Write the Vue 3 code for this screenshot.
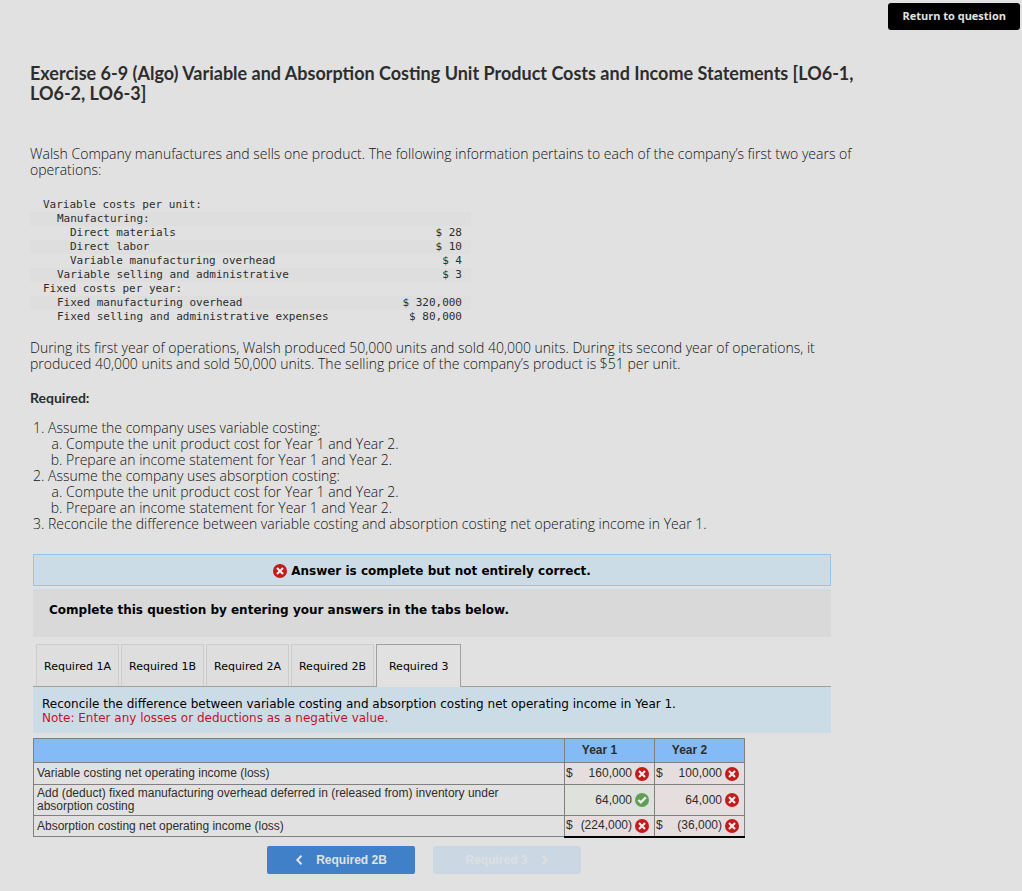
<template>
  <div class="page">
    <header class="topbar">
      <button type="button" class="return-btn">Return to question</button>
    </header>

    <main class="content">
      <h1 class="title">
        Exercise 6-9 (Algo) Variable and Absorption Costing Unit Product Costs and Income Statements [LO6-1,
        LO6-2, LO6-3]
      </h1>

      <p class="text intro">
        Walsh Company manufactures and sells one product. The following information pertains to each of the company’s first two years of
        operations:
      </p>

      <table class="costs">
        <tbody>
          <tr v-for="row in costs" :key="row.label">
            <th scope="row" :class="`level-${row.level}`">{{ row.label }}</th>
            <td>{{ row.value }}</td>
          </tr>
        </tbody>
      </table>

      <p class="text operations">
        During its first year of operations, Walsh produced 50,000 units and sold 40,000 units. During its second year of operations, it
        produced 40,000 units and sold 50,000 units. The selling price of the company’s product is $51 per unit.
      </p>

      <h2 class="required">Required:</h2>

      <ol class="text tasks">
        <li v-for="task in tasks" :key="task.text">
          {{ task.text }}
          <ol v-if="task.parts" class="parts">
            <li v-for="part in task.parts" :key="part">{{ part }}</li>
          </ol>
        </li>
      </ol>

      <section class="worksheet">
        <div class="banner">
          <svg class="mark" viewBox="0 0 14 14" aria-hidden="true">
            <circle cx="7" cy="7" r="7" fill="#c41a1a" />
            <path d="M4 4l6 6M10 4L4 10" stroke="#eee" stroke-width="2.2" />
          </svg>
          <span>Answer is complete but not entirely correct.</span>
        </div>

        <div class="instructions">Complete this question by entering your answers in the tabs below.</div>

        <div class="tabs" role="tablist">
          <button
            v-for="tab in tabs"
            :key="tab"
            type="button"
            role="tab"
            class="tab"
            :class="{ active: tab === activeTab }"
            :aria-selected="tab === activeTab"
            @click="activeTab = tab"
          >
            {{ tab }}
          </button>
        </div>

        <div class="prompt">
          <p>Reconcile the difference between variable costing and absorption costing net operating income in Year 1.</p>
          <p class="note">Note: Enter any losses or deductions as a negative value.</p>
        </div>

        <table class="answers">
          <colgroup>
            <col />
            <col class="year" />
            <col class="year" />
          </colgroup>
          <thead>
            <tr>
              <td></td>
              <th scope="col"><span>Year 1</span></th>
              <th scope="col"><span>Year 2</span></th>
            </tr>
          </thead>
          <tbody>
            <tr v-for="row in answers" :key="row.label">
              <th scope="row"><div class="row-label">{{ row.label }}</div></th>
              <td
                v-for="(cell, i) in row.cells"
                :key="i"
                :class="[cell.correct ? 'right' : 'wrong', { total: row.total }]"
              >
                <div class="answer">
                  <span>{{ row.currency ? '$' : '' }}</span>
                  <span class="amount">{{ cell.value }}</span>
                  <svg v-if="cell.correct" class="mark" viewBox="0 0 14 14" role="img" aria-label="Correct">
                    <circle cx="7" cy="7" r="7" fill="#5f9f58" />
                    <path d="M3.3 7l2.5 2.4 5-5" fill="none" stroke="#eee" stroke-width="2.2" />
                  </svg>
                  <svg v-else class="mark" viewBox="0 0 14 14" role="img" aria-label="Incorrect">
                    <circle cx="7" cy="7" r="7" fill="#c41a1a" />
                    <path d="M4 4l6 6M10 4L4 10" stroke="#eee" stroke-width="2.2" />
                  </svg>
                </div>
              </td>
            </tr>
          </tbody>
        </table>

        <nav class="pager">
          <button type="button" class="pager-btn">
            <svg class="chevron" viewBox="0 0 8 10" aria-hidden="true">
              <path d="M6.5 0.8L2.3 5l4.2 4.2" />
            </svg>
            Required 2B
          </button>
          <button type="button" class="pager-btn" disabled>
            Required 3
            <svg class="chevron" viewBox="0 0 8 10" aria-hidden="true">
              <path d="M1.5 0.8L5.7 5 1.5 9.2" />
            </svg>
          </button>
        </nav>
      </section>
    </main>
  </div>
</template>

<script setup>
import { ref } from 'vue'

const costs = [
  { label: 'Variable costs per unit:', level: 0, value: '' },
  { label: 'Manufacturing:', level: 1, value: '' },
  { label: 'Direct materials', level: 2, value: '$ 28' },
  { label: 'Direct labor', level: 2, value: '$ 10' },
  { label: 'Variable manufacturing overhead', level: 2, value: '$ 4' },
  { label: 'Variable selling and administrative', level: 1, value: '$ 3' },
  { label: 'Fixed costs per year:', level: 0, value: '' },
  { label: 'Fixed manufacturing overhead', level: 1, value: '$ 320,000' },
  { label: 'Fixed selling and administrative expenses', level: 1, value: '$ 80,000' }
]

const parts = [
  'Compute the unit product cost for Year 1 and Year 2.',
  'Prepare an income statement for Year 1 and Year 2.'
]

const tasks = [
  { text: 'Assume the company uses variable costing:', parts },
  { text: 'Assume the company uses absorption costing:', parts },
  { text: 'Reconcile the difference between variable costing and absorption costing net operating income in Year 1.' }
]

const tabs = ['Required 1A', 'Required 1B', 'Required 2A', 'Required 2B', 'Required 3']
const activeTab = ref('Required 3')

const answers = [
  {
    label: 'Variable costing net operating income (loss)',
    currency: true,
    cells: [{ value: '160,000' }, { value: '100,000' }]
  },
  {
    label: 'Add (deduct) fixed manufacturing overhead deferred in (released from) inventory under absorption costing',
    cells: [{ value: '64,000', correct: true }, { value: '64,000' }]
  },
  {
    label: 'Absorption costing net operating income (loss)',
    currency: true,
    total: true,
    cells: [{ value: '(224,000)' }, { value: '(36,000)' }]
  }
]
</script>

<style>
body {
  margin: 0;
  background: #e1e1e1;
}
</style>

<style scoped>
.page {
  color: #2d2d2d;
  font-family: Lato, sans-serif;
}

button {
  border: 0;
  cursor: pointer;
}

.topbar {
  display: flex;
  justify-content: flex-end;
  padding: 3px 2px 0 0;
}

.return-btn {
  height: 27px;
  padding: 0 14px 3px;
  border-radius: 3px;
  background: #000;
  color: #e1e1e1;
  font: 700 11px "Open Sans", sans-serif;
}

.content {
  max-width: 840px;
  padding: 33px 30px 16px;
}

.title {
  margin: 0 0 43px;
  font-size: 18px;
  font-weight: 700;
  line-height: 20px;
}

.text {
  margin: 0;
  color: #111;
  font-family: "Open Sans", sans-serif;
  font-size: 14px;
  font-weight: 300;
  line-height: 16px;
}

/* Cost data */
.costs {
  width: 441px;
  margin: 20px 0 16px;
  border-collapse: collapse;
  font: 11px/14px "DejaVu Sans Mono", monospace;
}

.costs tr:nth-child(even) {
  background: #dedede;
}

.costs th {
  height: 14px;
  padding: 0 0 0 13px;
  font-weight: 400;
  text-align: left;
}

.costs th.level-1 {
  padding-left: 27px;
}

.costs th.level-2 {
  padding-left: 40px;
}

.costs td {
  padding: 0 9px 0 0;
  text-align: right;
}

.required {
  margin: 18px 0 14px;
  font-size: 14px;
  font-weight: 700;
  line-height: 16px;
}

.tasks {
  padding-left: 18px;
}

.parts {
  padding-left: 18px;
  list-style-type: lower-alpha;
}

/* Worksheet */
.worksheet {
  max-width: 798px;
  margin: 22px 0 0 3px;
  color: #000;
  font-family: "DejaVu Sans", sans-serif;
}

.mark {
  flex-shrink: 0;
  width: 14px;
  height: 14px;
}

.banner {
  display: flex;
  align-items: center;
  justify-content: center;
  gap: 4px;
  height: 32px;
  padding-top: 2px;
  box-sizing: border-box;
  border: 1px solid #9ac3ea;
  background: #ccdce6;
  font-size: 12px;
  font-weight: 700;
}

.instructions {
  margin-top: 3px;
  padding: 13px 16px 19px;
  background: #d9d9d9;
  font-size: 12px;
  font-weight: 700;
  line-height: 16px;
}

.tabs {
  display: flex;
  gap: 2px;
  margin-top: 7px;
  padding-left: 3px;
  border-bottom: 1px solid #a0a0a0;
}

.tab {
  height: 42px;
  padding: 2px 7px 0;
  border: 1px solid #ccc;
  border-bottom: 0;
  background: #dedede;
  color: #000;
  font: 11px "DejaVu Sans", sans-serif;
}

.tab.active {
  height: 43px;
  margin-bottom: -1px;
  padding: 1px 12px 0;
  border-color: #a0a0a0;
  background: #e1e1e1;
}

.prompt {
  padding: 10px 9px 8px;
  background: #ccdce6;
  font-size: 12px;
  line-height: 14px;
}

.prompt p {
  margin: 0;
}

.prompt .note {
  color: #c8102e;
}

.answers {
  width: 712px;
  max-width: 100%;
  margin-top: 5px;
  border-collapse: collapse;
  table-layout: fixed;
  color: #2d2d2d;
  font: 12px/13px "Liberation Sans", Arial, sans-serif;
}

.answers .year {
  width: 90px;
}

.answers th,
.answers td {
  padding: 0;
  border: 1px solid #808080;
}

.answers thead {
  background: #84bbf6;
}

.answers thead tr {
  height: 24px;
}

.answers thead th span {
  padding-right: 20px;
}

.answers tbody tr {
  height: 22px;
}

.answers tbody tr:last-child {
  height: 21px;
}

.answers tbody th {
  padding: 2px 3px;
  font-weight: 400;
  text-align: left;
}

.row-label {
  max-width: 480px;
}

.answers .wrong {
  background: #e6dede;
}

.answers .right {
  background: #dfe1dd;
}

.answers .total {
  border-bottom: 2px solid #000;
}

.answer {
  display: flex;
  align-items: center;
  gap: 3px;
  padding: 0 5px 0 1px;
}

.amount {
  flex: 1;
  text-align: right;
}

.pager {
  display: flex;
  justify-content: center;
  gap: 18px;
  margin-top: 8px;
  padding-right: 16px;
}

.pager-btn {
  display: flex;
  align-items: center;
  justify-content: center;
  gap: 13px;
  width: 148px;
  height: 28px;
  border-radius: 2px;
  background: #4080c8;
  color: #e1e1e1;
  font: 700 12px "Liberation Sans", Arial, sans-serif;
}

.pager-btn:disabled {
  background: #cbd8e4;
  color: #dddfe1;
  cursor: default;
}

.chevron {
  width: 8px;
  height: 10px;
  fill: none;
  stroke: currentColor;
  stroke-width: 2;
}
</style>
